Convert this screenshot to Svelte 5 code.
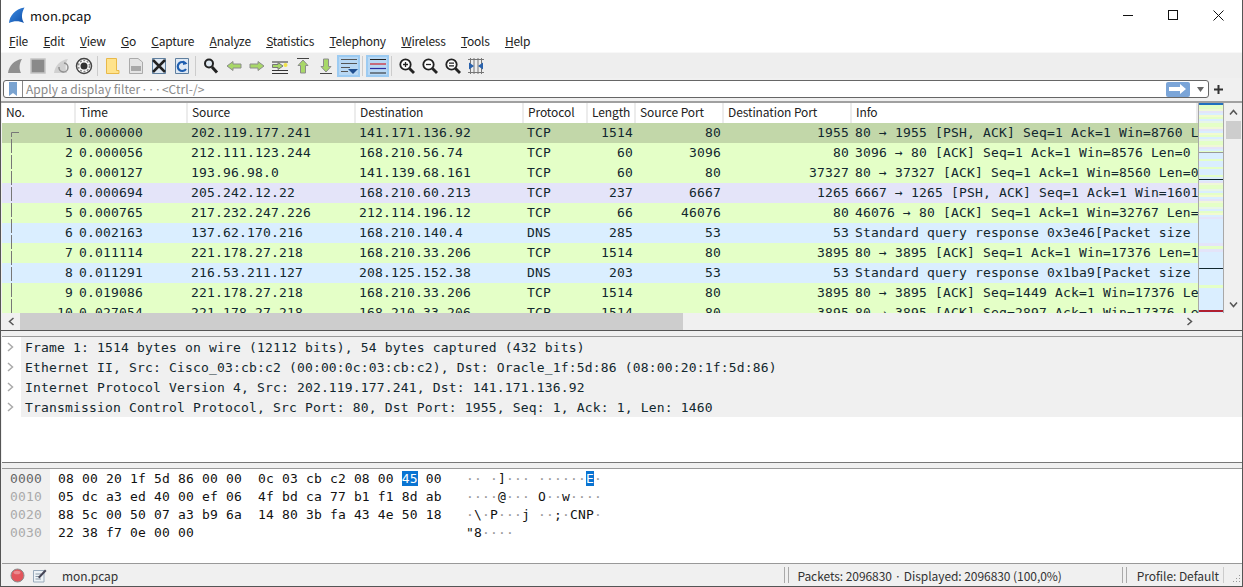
<script>
const menus = [['F','ile'],['E','dit'],['V','iew'],['G','o'],['C','apture'],['A','nalyze'],['S','tatistics'],['T','elephony'],['W','ireless'],['T','ools'],['H','elp']];
const cols = ['No.','Time','Source','Destination','Protocol','Length','Source Port','Destination Port','Info'];
const rows = [
 ['sel',1,'0.000000','202.119.177.241','141.171.136.92','TCP',1514,80,1955,'80 → 1955 [PSH, ACK] Seq=1 Ack=1 Win=8760 Len=1460'],
 ['tcp',2,'0.000056','212.111.123.244','168.210.56.74','TCP',60,3096,80,'3096 → 80 [ACK] Seq=1 Ack=1 Win=8576 Len=0'],
 ['tcp',3,'0.000127','193.96.98.0','141.139.68.161','TCP',60,80,37327,'80 → 37327 [ACK] Seq=1 Ack=1 Win=8560 Len=0'],
 ['pur',4,'0.000694','205.242.12.22','168.210.60.213','TCP',237,6667,1265,'6667 → 1265 [PSH, ACK] Seq=1 Ack=1 Win=16016 Len=183'],
 ['tcp',5,'0.000765','217.232.247.226','212.114.196.12','TCP',66,46076,80,'46076 → 80 [ACK] Seq=1 Ack=1 Win=32767 Len=12'],
 ['udp',6,'0.002163','137.62.170.216','168.210.140.4','DNS',285,53,53,'Standard query response 0x3e46[Packet size limited'],
 ['tcp',7,'0.011114','221.178.27.218','168.210.33.206','TCP',1514,80,3895,'80 → 3895 [ACK] Seq=1 Ack=1 Win=17376 Len=1460'],
 ['udp',8,'0.011291','216.53.211.127','208.125.152.38','DNS',203,53,53,'Standard query response 0x1ba9[Packet size limited'],
 ['tcp',9,'0.019086','221.178.27.218','168.210.33.206','TCP',1514,80,3895,'80 → 3895 [ACK] Seq=1449 Ack=1 Win=17376 Len=1460'],
 ['tcp',10,'0.027054','221.178.27.218','168.210.33.206','TCP',1514,80,3895,'80 → 3895 [ACK] Seq=2897 Ack=1 Win=17376 Len=1460'],
];
const details = ['Frame 1: 1514 bytes on wire (12112 bits), 54 bytes captured (432 bits)','Ethernet II, Src: Cisco_03:cb:c2 (00:00:0c:03:cb:c2), Dst: Oracle_1f:5d:86 (08:00:20:1f:5d:86)','Internet Protocol Version 4, Src: 202.119.177.241, Dst: 141.171.136.92','Transmission Control Protocol, Src Port: 80, Dst Port: 1955, Seq: 1, Ack: 1, Len: 1460'];
const hex = [
 ['0000','08 00 20 1f 5d 86 00 00  0c 03 cb c2 08 00 ','45',' 00','·· ·]··· ······','E','·'],
 ['0010','05 dc a3 ed 40 00 ef 06  4f bd ca 77 b1 f1 8d ab','','','····@··· O··w····','',''],
 ['0020','88 5c 00 50 07 a3 b9 6a  14 80 3b fa 43 4e 50 18','','','·\\·P···j ··;·CNP·','',''],
 ['0030','22 38 f7 0e 00 00','','','"8····','',''],
];
const parts = s => [...s].map(c => ({c, dot: c === '·'}));
const stripes = [];
const pal = ['#e4ffc7','#daeeff','#f2fbd0','#e4e4f9','#e4ffc7','#e8f6e8','#e4ffc7','#daeeff','#f0f8d8'];
let k = 0;
for (let y = 2; y < 48; y += 2) stripes.push({y, h:2, f: pal[(k++*4)%9] });
for (let y = 48; y < 76; y += 2) stripes.push({y, h:2, f: y%8===0 ? '#e4ffc7' : '#daeeff'});
for (let y = 76; y < 116; y += 2) stripes.push({y, h:2, f: pal[(k++*5)%9] });
for (let y = 116; y < 207; y += 3) stripes.push({y, h:3, f: y%13===0 ? '#e4ffc7' : (y>=140&&y<148 ? '#e4e4f9' : '#daeeff')});
</script>

<div class="win">
  <header class="title">
    <svg class="fin" width="18" height="17" viewBox="0 0 18 17">
      <defs><linearGradient id="fg" x1="0" y1="0" x2="1" y2="1"><stop offset="0" stop-color="#3f8fe6"/><stop offset="1" stop-color="#0f4fa8"/></linearGradient></defs>
      <path d="M1 16 C1.500 9 7 2 16.500 0.500 C13.500 6 13 11 16 16 C11 13.500 6 13.500 1 16Z" fill="url(#fg)"/>
    </svg>
    <span class="name">mon.pcap</span>
    <span class="grow"></span>
    <svg class="ctl" width="11" height="11"><path d="M0 5.500H10" stroke="#111" fill="none"/></svg>
    <svg class="ctl" width="11" height="11"><rect x="0.500" y="0.500" width="9" height="9" stroke="#111" fill="none"/></svg>
    <svg class="ctl last" width="11" height="11"><path d="M0.500 0.500L10.500 10.500M10.500 0.500L0.500 10.500" stroke="#111" fill="none"/></svg>
  </header>

  <nav class="menu">
    {#each menus as m}<span><u>{m[0]}</u>{m[1]}</span>{/each}
  </nav>

  <div class="tools">
    <button class="tb"><svg width="18" height="18" viewBox="0 0 18 18"><path d="M2 16C3 9 8 3 16 2C13 7 13 12 15 16Z" fill="#8f8f8f"/></svg></button>
    <button class="tb"><svg width="18" height="18" viewBox="0 0 18 18"><rect x="2" y="2" width="14" height="14" fill="#8a8a8a" stroke="#c4c4c4" stroke-width="1.500"/></svg></button>
    <button class="tb"><svg width="18" height="18" viewBox="0 0 18 18"><path d="M2 16C3 9 8 3 16 2C13 7 13 12 15 16Z" fill="#d0d0d0"/><path d="M12 6A4.500 4.500 0 1 1 7 10" stroke="#8f8f8f" stroke-width="1.500" fill="none"/></svg></button>
    <button class="tb"><svg width="18" height="18" viewBox="0 0 18 18"><circle cx="9" cy="9" r="7.500" fill="#fff" stroke="#444" stroke-width="1.500"/><circle cx="9" cy="9" r="3.500" fill="#333"/><circle cx="9" cy="9" r="5.500" fill="none" stroke="#888" stroke-dasharray="2 1.500" stroke-width="1.500"/></svg></button>
    <i class="sep"></i>
    <button class="tb"><svg width="18" height="18" viewBox="0 0 18 18"><path d="M2.500 1.500H12.500V13.500H15V16.500H2.500Z" fill="#ffe38c" stroke="#e8b949"/></svg></button>
    <button class="tb"><svg width="18" height="18" viewBox="0 0 18 18"><path d="M2.500 1.500H11L15.500 5V16.500H2.500Z" fill="#e4e4e4" stroke="#aaa"/><path d="M4 9H14V14H4Z" fill="#a8a8a8"/></svg></button>
    <button class="tb"><svg width="18" height="18" viewBox="0 0 18 18"><path d="M2.500 1.500H15.500V16.500H2.500Z" fill="#dfe9f4" stroke="#5f7f9f"/><path d="M3 3L15 15M15 3L3 15" stroke="#222" stroke-width="2.500"/></svg></button>
    <button class="tb"><svg width="18" height="18" viewBox="0 0 18 18"><path d="M2.500 1.500H15.500V16.500H2.500Z" fill="#dfe9f4" stroke="#5f7f9f"/><path d="M13 7A4.500 4.500 0 1 0 13 12" stroke="#1f5fb0" stroke-width="2.200" fill="none"/><path d="M10 3.500L14.500 6.500L10 8Z" fill="#1f5fb0"/></svg></button>
    <i class="sep"></i>
    <button class="tb"><svg width="18" height="18" viewBox="0 0 18 18"><circle cx="7" cy="6.500" r="4" fill="#dfe8f0" stroke="#222" stroke-width="2"/><path d="M10 10L15 15.500" stroke="#222" stroke-width="3"/></svg></button>
    <button class="tb"><svg width="18" height="18" viewBox="0 0 18 18"><path d="M2 9L8 4.500V7H16V11H8V13.500Z" fill="#a8d868" stroke="#8c8c8c"/></svg></button>
    <button class="tb"><svg width="18" height="18" viewBox="0 0 18 18"><path d="M16 9L10 4.500V7H2V11H10V13.500Z" fill="#a8d868" stroke="#8c8c8c"/></svg></button>
    <button class="tb"><svg width="18" height="18" viewBox="0 0 18 18"><path d="M1 5H17M1 13.500H17M1 16.500H17" stroke="#333"/><path d="M12 9L7 5.500V7.500H1.500V10.500H7V12.500Z" fill="#a8d868" stroke="#777"/><circle cx="14.500" cy="8" r="2" fill="#f1e34b"/></svg></button>
    <button class="tb"><svg width="18" height="18" viewBox="0 0 18 18"><path d="M3 1.500H15" stroke="#444"/><path d="M9 3L14 8.500H11.500V16H6.500V8.500H4Z" fill="#a8d868" stroke="#8c8c8c"/></svg></button>
    <button class="tb"><svg width="18" height="18" viewBox="0 0 18 18"><path d="M3 16.500H15" stroke="#444"/><path d="M9 15L14 9.500H11.500V2H6.500V9.500H4Z" fill="#a8d868" stroke="#8c8c8c"/></svg></button>
    <button class="tb on"><svg width="18" height="18" viewBox="0 0 18 18"><path d="M1 2.500H17M1 6.500H17M1 10.500H10M1 14.500H8" stroke="#555"/><path d="M8 12H18L13 17Z" fill="#1f4f90"/></svg></button>
    <i class="sep"></i>
    <button class="tb on"><svg width="18" height="18" viewBox="0 0 18 18"><path d="M1 2.500H17M1 16H17" stroke="#222"/><path d="M1 7H17" stroke="#d0202a" stroke-width="1.200"/><path d="M1 11.500H17" stroke="#2a2ea0" stroke-width="1.200"/></svg></button>
    <i class="sep"></i>
    <button class="tb"><svg width="18" height="18" viewBox="0 0 18 18"><circle cx="7.500" cy="7.500" r="5.200" fill="#fff" stroke="#222" stroke-width="1.800"/><path d="M11.500 11.500L16 16" stroke="#222" stroke-width="2.800"/><path d="M5 7.500H10M7.500 5V10" stroke="#222" stroke-width="1.300"/></svg></button>
    <button class="tb"><svg width="18" height="18" viewBox="0 0 18 18"><circle cx="7.500" cy="7.500" r="5.200" fill="#fff" stroke="#222" stroke-width="1.800"/><path d="M11.500 11.500L16 16" stroke="#222" stroke-width="2.800"/><path d="M5 7.500H10" stroke="#222" stroke-width="1.300"/></svg></button>
    <button class="tb"><svg width="18" height="18" viewBox="0 0 18 18"><circle cx="7.500" cy="7.500" r="5.200" fill="#fff" stroke="#222" stroke-width="1.800"/><path d="M11.500 11.500L16 16" stroke="#222" stroke-width="2.800"/><path d="M5 6.200H10M5 8.800H10" stroke="#222" stroke-width="1.200"/></svg></button>
    <button class="tb"><svg width="18" height="18" viewBox="0 0 18 18"><path d="M1 2.500H17M1 15.500H17M3.500 1V17M14.500 1V17M7 1V17M11 1V17" stroke="#777"/><path d="M2 5.500L7 9L2 12.500ZM16 5.500L11 9L16 12.500Z" fill="#2a62ac"/></svg></button>
  </div>

  <div class="filter">
    <div class="input">
      <svg class="mark" width="10" height="15"><path d="M1 0H9V14L5 11L1 14Z" fill="#7aa3d0"/></svg>
      <i class="fsep"></i>
      <span class="ph">Apply a display filter <span class="dots">···</span> &lt;Ctrl-/&gt;</span>
      <span class="grow"></span>
      <span class="go"><svg width="18" height="10"><path d="M0 3H11V0L17 5L11 10V7H0Z" fill="#fff"/></svg></span>
      <svg class="drop" width="8" height="5"><path d="M0 0H7L3.500 5Z" fill="#666"/></svg>
    </div>
    <svg class="plus" width="9" height="9"><path d="M4.500 0V9M0 4.500H9" stroke="#333" stroke-width="2"/></svg>
  </div>

  <section class="list">
    <div class="listmain">
      <div class="cols head">
        {#each cols as c}<div>{c}</div>{/each}
      </div>
      <div class="rows">
        <svg class="rel" width="10" height="190"><path d="M0.500 190V9.500H8" stroke="#777" fill="none" stroke-dasharray="14 2"/></svg>
        {#each rows as r}
          <div class="cols row {r[0]}">
            <div class="rt">{r[1]}</div><div>{r[2]}</div><div>{r[3]}</div><div>{r[4]}</div><div>{r[5]}</div><div class="rt">{r[6]}</div><div class="rt">{r[7]}</div><div class="rt">{r[8]}</div><div class="info">{r[9]}</div>
          </div>
        {/each}
      </div>
      <div class="hbar">
        <svg width="7" height="9"><path d="M5.500 1L1.500 4.500L5.500 8" stroke="#555" stroke-width="1.500" fill="none"/></svg>
        <div class="hthumb"></div>
        <svg width="7" height="9"><path d="M1.500 1L5.500 4.500L1.500 8" stroke="#555" stroke-width="1.500" fill="none"/></svg>
      </div>
    </div>
    <div class="side">
      <div class="sidetop">
        <svg class="map" width="26" height="210" viewBox="0 0 26 210">
          <rect width="26" height="210" fill="#daeeff"/>
          {#each stripes as s}<rect x="1" y={s.y} width="24" height={s.h} fill={s.f}/>{/each}
          <rect x="1" width="24" height="2" fill="#2070c0"/>
          <rect x="1" y="49" width="24" height="1" fill="#999"/>
          <rect x="1" y="76" width="24" height="1" fill="#12272e"/>
          <rect x="1" y="165" width="24" height="1" fill="#12272e"/>
          <rect x="1" y="207" width="24" height="2" fill="#b02030"/>
          <rect x="0" width="1" height="210" fill="#a8a8a8"/>
          <rect x="25" width="1" height="210" fill="#a8a8a8"/>
        </svg>
        <div class="vbar">
          <svg width="9" height="7"><path d="M1 5.500L4.500 1.500L8 5.500" stroke="#555" stroke-width="1.500" fill="none"/></svg>
          <div class="vthumb"></div>
          <span class="grow"></span>
          <svg width="9" height="7"><path d="M1 1.500L4.500 5.500L8 1.500" stroke="#555" stroke-width="1.500" fill="none"/></svg>
        </div>
      </div>
      <div class="corner"></div>
    </div>
  </section>

  <section class="details">
    {#each details as d}
      <div class="drow">
        <svg width="7" height="10"><path d="M1 1L5.500 5L1 9" stroke="#aaa" stroke-width="1.500" fill="none"/></svg>
        <div class="dtext">{d}</div>
      </div>
    {/each}
  </section>

  <section class="hex">
    <div class="gutter">
      {#each hex as h, i}<div class:first={i === 0}>{h[0]}</div>{/each}
    </div>
    <div class="bytes">
      {#each hex as h}
        <div class="hline"><span class="hexcol">{h[1]}{#if h[2]}<b>{h[2]}</b>{/if}{h[3]}</span><span>{#each parts(h[4]) as p}<span class:dot={p.dot}>{p.c}</span>{/each}{#if h[5]}<b>{h[5]}</b>{/if}{#each parts(h[6]) as p}<span class:dot={p.dot}>{p.c}</span>{/each}</span></div>
      {/each}
    </div>
  </section>

  <footer class="status">
    <svg class="led" width="15" height="15"><circle cx="7.500" cy="7.500" r="6.500" fill="#e2555c" stroke="#8c8c8c"/><ellipse cx="7" cy="4.500" rx="3.500" ry="1.800" fill="#ec8a8e"/></svg>
    <svg class="note" width="15" height="15"><path d="M1.500 2.500H12V14H1.500Z" fill="#eef3f7" stroke="#9ab"/><path d="M3.500 6H9M3.500 8.500H9M3.500 11H9" stroke="#8a9aa8"/><path d="M6 9L13 1.500L14.500 3L7.500 10.500Z" fill="#445"/></svg>
    <span class="file">mon.pcap</span>
    <span class="grow"></span>
    <i class="grip"></i>
    <span class="pk">Packets: 2096830 · Displayed: 2096830 (100,0%)</span>
    <i class="grip"></i>
    <span class="pf">Profile: Default</span>
    <i class="lastsep"></i>
    <svg class="size" width="9" height="9"><path d="M7 1h1v1h-1zM4 4h1v1h-1zM7 4h1v1h-1zM1 7h1v1h-1zM4 7h1v1h-1zM7 7h1v1h-1z" fill="#999"/></svg>
  </footer>
</div>

<style>
:global(body) { margin: 0; background: #f0f0f0; }
.win { width: 1243px; height: 587px; box-sizing: border-box; display: flex; flex-direction: column; overflow: hidden; border: 1px solid #555; border-top: 0; background: #f0f0f0; font-family: "Noto Sans CJK KR", "Noto Sans", sans-serif; font-size: 12px; color: #222; }
.grow { flex: 1; }
.title { height: 30px; flex: none; background: #fff; display: flex; align-items: center; padding-left: 7px; }
.name { margin-left: 4px; font-size: 13px; color: #111; }
.ctl { margin-right: 34px; }
.ctl.last { margin-right: 18px; }
.menu { height: 22px; flex: none; box-sizing: border-box; padding: 0 0 2px 8px; background: #fff; display: flex; align-items: center; gap: 15.400px; font-size: 12px; letter-spacing: -.25px; color: #222; }
.tools { height: 26px; flex: none; box-sizing: border-box; border-top: 1px solid #f8f8f8; display: flex; align-items: center; padding-left: 2px; background: #eee; }
.tb { width: 23px; height: 22px; padding: 0; margin: 0; box-sizing: border-box; border: 1px solid transparent; background: none; display: flex; align-items: center; justify-content: center; }
.tb.on { background: #b8d8f4; border: 2px solid #9ccbf2; }
.sep { width: 1px; height: 20px; background: #ccc; margin: 0 3px 0 2px; flex: none; }
.filter { height: 23px; flex: none; display: flex; align-items: center; padding: 0 0 1px 2px; background: #f0f0f0; box-sizing: border-box; }
.input { width: 1206px; height: 18px; box-sizing: border-box; background: #fff; border: 1px solid #666; border-radius: 3px; display: flex; align-items: center; padding-left: 4px; }
.mark { flex: none; }
.fsep { width: 1px; height: 16px; background: #888; margin: 0 3px 0 4px; }
.ph { color: #8a8a8a; font-size: 12px; letter-spacing: .05px; line-height: 14px; }
.dots { letter-spacing: 0; margin: 0 -2px; }
.go { width: 24px; height: 15px; background: #7ba5d8; border-radius: 2px; display: flex; align-items: center; justify-content: center; margin-right: 7px; }
.drop { margin-right: 3px; }
.plus { margin-left: 5px; }
.list { height: 230px; flex: none; display: flex; border-top: 2px solid #a0a0a0; box-sizing: border-box; border-bottom: 1px solid #555; }
.listmain { width: 1196px; flex: none; margin-left: 1px; display: flex; flex-direction: column; background: #fff; }
.cols { display: grid; grid-template-columns: 74px 112px 168px 168px 64px 48px 88px 128px 346px; width: 1196px; }
.head { height: 20px; flex: none; background: #fff; font-size: 12px; letter-spacing: -.1px; color: #222; line-height: 18px; }
.head div { padding-left: 4px; box-sizing: border-box; border-right: 2px solid #ececec; }
.rows { height: 190px; flex: none; overflow: hidden; position: relative; font-family: "DejaVu Sans Mono", monospace; font-size: 13px; letter-spacing: .17px; color: #12272e; }
.rel { position: absolute; left: 9px; top: 0; z-index: 1; }
.row { height: 20px; line-height: 19px; }
.row div { padding: 0 3px; box-sizing: border-box; white-space: nowrap; overflow: hidden; }
.row .rt { text-align: right; }
.sel { background: #c2d7a9; }
.tcp { background: #e4ffc7; }
.pur { background: #e4e4f9; }
.udp { background: #daeeff; }
.hbar { height: 17px; flex: none; background: #f0f0f0; display: flex; align-items: center; }
.hbar svg { flex: none; margin: 0 5px 0 6px; }
.hbar svg:last-child { margin: 0 0 0 503px; }
.hthumb { width: 663px; height: 17px; background: #cdcdcd; }
.side { flex: 1; display: flex; flex-direction: column; }
.sidetop { height: 210px; display: flex; }
.map { flex: none; }
.vbar { flex: 1; display: flex; flex-direction: column; align-items: center; padding-top: 6px; background: #f0f0f0; box-sizing: border-box; padding-bottom: 5px; }
.vthumb { width: 15px; height: 18px; margin-top: 5px; background: #cdcdcd; }
.corner { flex: 1; }
.details { height: 127px; flex: none; margin: 5px 0 0 1px; box-sizing: border-box; border-top: 1px solid #999; border-bottom: 1px solid #777; background: #fff; font-family: "DejaVu Sans Mono", monospace; font-size: 13px; letter-spacing: .17px; color: #12272e; }
.drow { height: 20px; display: flex; align-items: center; }
.drow svg { margin: 0 0 0 5px; flex: none; }
.dtext { margin-left: 7px; flex: 1; background: #f0f0f0; line-height: 21px; height: 20px; padding-left: 4px; }
.hex { height: 96px; flex: none; margin: 5px 0 0 1px; box-sizing: border-box; border-top: 1px solid #999; border-bottom: 1px solid #999; background: #fff; display: flex; font-family: "DejaVu Sans Mono", monospace; font-size: 13px; letter-spacing: .17px; line-height: 18px; color: #111; }
.gutter { width: 48px; flex: none; background: #f0f0f0; padding: 1px 0 0 8px; box-sizing: border-box; color: #aaa; }
.gutter .first { color: #666; }
.bytes { padding: 1px 0 0 8px; }
.hline { white-space: pre; display: flex; height: 18px; }
.hexcol { width: 408px; flex: none; }
b { font-weight: normal; background: #0a74d2; color: #fff; }
.dot { color: #999; }
.status { height: 22px; flex: none; display: flex; align-items: center; padding-left: 9px; font-size: 12px; letter-spacing: -.06px; color: #333; }
.note { margin-left: 7px; }
.file { margin-left: 15px; }
.grip { width: 3px; height: 16px; border-left: 1px solid #aaa; border-right: 1px solid #aaa; flex: none; }
.pk { margin: 0 60px 0 8px; }
.pf { margin: 0 4px 0 10px; }
.lastsep { width: 1px; height: 16px; background: #ccc; }
.size { margin: 6px 1px 0 8px; }
</style>
